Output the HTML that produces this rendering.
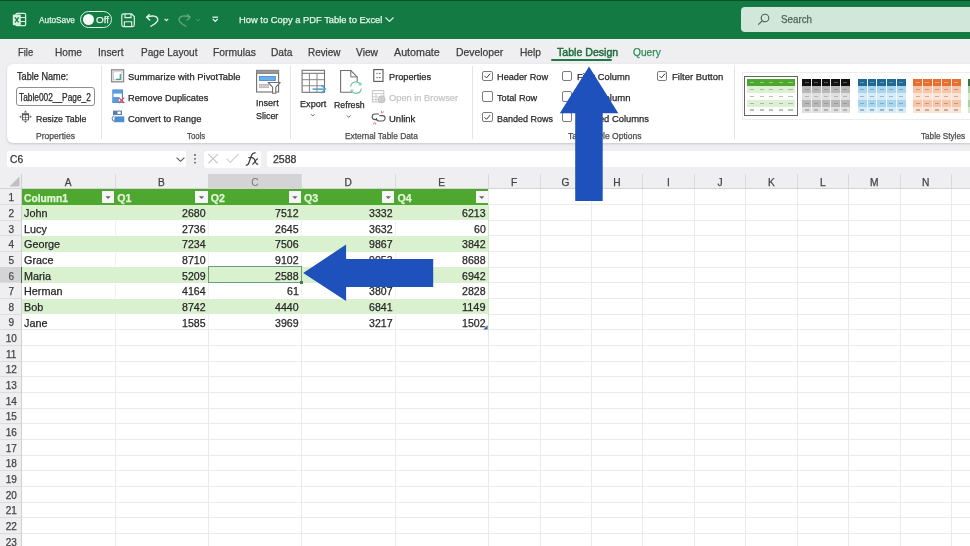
<!DOCTYPE html>
<html><head><meta charset="utf-8">
<style>
*{margin:0;padding:0;box-sizing:border-box}
html,body{width:970px;height:546px;overflow:hidden;background:#fff;font-family:"Liberation Sans",sans-serif;color:#262626}
.a{position:absolute;white-space:nowrap;-webkit-text-stroke:0.25px currentColor}
svg{position:absolute;overflow:visible}
#root{position:absolute;left:0;top:0;width:970px;height:546px;will-change:transform}
</style></head><body><div id="root">

<div class="a" style="left:0.00px;top:0.00px;width:970.00px;height:38.80px;background:#127a42;"></div>
<div class="a" style="left:0.00px;top:0.00px;width:970.00px;height:1.30px;background:#064f22;"></div>
<svg style="left:0;top:0" width="30" height="30" viewBox="0 0 30 30">
<rect x="16" y="13.3" width="9.6" height="12.4" rx="1.2" fill="none" stroke="#d6eedd" stroke-width="1.3"/>
<path d="M16 17.5 H25.6 M16 21.5 H25.6" stroke="#d6eedd" stroke-width="1.2"/>
<rect x="12.8" y="14.6" width="8" height="10.6" rx="1" fill="#d6eedd"/>
<path d="M15 17.3 L18.6 22.5 M18.6 17.3 L15 22.5" stroke="#127a42" stroke-width="1.3"/>
</svg>
<div class="a" style="left:38.50px;top:13.91px;font-size:9.6px;line-height:11.04px;color:#e6f4ea;transform:scaleX(0.8647);transform-origin:0 0;">AutoSave</div>
<div class="a" style="left:80.00px;top:11.00px;width:31.50px;height:17.00px;background:transparent;border:1.3px solid #dcefe3;border-radius:9px"></div>
<div class="a" style="left:82.80px;top:13.80px;width:11.40px;height:11.40px;background:#f4faf6;border-radius:50%"></div>
<div class="a" style="left:96.00px;top:13.91px;font-size:9.6px;line-height:11.04px;color:#e6f4ea;transform:scaleX(1.0295);transform-origin:0 0;">Off</div>
<svg style="left:0;top:0" width="140" height="30" viewBox="0 0 140 30">
<path d="M123.5 13.8 H131.5 L134.3 16.6 V24.8 Q134.3 26.6 132.5 26.6 H123.6 Q121.8 26.6 121.8 24.8 V15.6 Q121.8 13.8 123.5 13.8 Z" fill="none" stroke="#e6f4ea" stroke-width="1.2"/>
<path d="M125 13.8 V17.6 H131 V13.8" fill="none" stroke="#e6f4ea" stroke-width="1.1"/>
<path d="M124.4 26.6 V21.8 H131.7 V26.6" fill="none" stroke="#e6f4ea" stroke-width="1.1"/>
</svg>
<svg style="left:0;top:0" width="220" height="30" viewBox="0 0 220 30">
<path d="M146.8 17.3 C152 15.2 157.5 15.5 157.8 19.5 C158 22.5 153.5 24.5 150.5 26.6" fill="none" stroke="#e6f4ea" stroke-width="1.3"/>
<path d="M149.6 14.2 L146.6 17.3 L150.2 20.4" fill="none" stroke="#e6f4ea" stroke-width="1.3"/>
<path d="M164.6 18.8 L166.4 20.7 L168.2 18.8" fill="none" stroke="#e6f4ea" stroke-width="1.1"/>
<path d="M190 17.3 C184.8 15.2 179.3 15.5 179 19.5 C178.8 22.5 183.3 24.5 186.3 26.6" fill="none" stroke="#5ea87b" stroke-width="1.3"/>
<path d="M187.2 14.2 L190.2 17.3 L186.6 20.4" fill="none" stroke="#5ea87b" stroke-width="1.3"/>
<path d="M196.3 19.2 L198 20.9 L199.7 19.2" fill="none" stroke="#5ea87b" stroke-width="0.9"/>
<path d="M212.5 17.2 H218" stroke="#e6f4ea" stroke-width="1.3"/>
<path d="M212.8 19 L215.25 21.4 L217.7 19" fill="none" stroke="#e6f4ea" stroke-width="1.3"/>
</svg>
<div class="a" style="left:238.80px;top:14.21px;font-size:9.6px;line-height:11.04px;color:#e6f4ea;transform:scaleX(0.9756);transform-origin:0 0;">How to Copy a PDF Table to Excel</div>
<svg style="left:0;top:0" width="400" height="30" viewBox="0 0 400 30"><path d="M385.5 17.5 L389.5 21.5 L393.5 17.5" fill="none" stroke="#dcefe3" stroke-width="1.2"/></svg>
<div class="a" style="left:741.00px;top:7.00px;width:240.00px;height:25.00px;background:#d1e7d9;border-radius:4px"></div>
<svg style="left:0;top:0" width="800" height="40" viewBox="0 0 800 40">
<circle cx="765" cy="18" r="3.8" fill="none" stroke="#4b6153" stroke-width="1.1"/>
<path d="M762.2 20.8 L758.3 24.7" stroke="#4b6153" stroke-width="1.2"/>
</svg>
<div class="a" style="left:780.50px;top:14.45px;font-size:10px;line-height:11.50px;color:#4d6456;transform:scaleX(0.9784);transform-origin:0 0;">Search</div>
<div class="a" style="left:0.00px;top:38.80px;width:970.00px;height:135.20px;background:#efeef0;"></div>
<div class="a" style="left:17.70px;top:45.64px;font-size:10.9px;line-height:12.54px;color:#3d3d3d;transform:scaleX(0.8654);transform-origin:0 0;">File</div>
<div class="a" style="left:54.80px;top:45.64px;font-size:10.9px;line-height:12.54px;color:#3d3d3d;transform:scaleX(0.9286);transform-origin:0 0;">Home</div>
<div class="a" style="left:98.10px;top:45.64px;font-size:10.9px;line-height:12.54px;color:#3d3d3d;transform:scaleX(0.9354);transform-origin:0 0;">Insert</div>
<div class="a" style="left:140.50px;top:45.64px;font-size:10.9px;line-height:12.54px;color:#3d3d3d;transform:scaleX(0.9230);transform-origin:0 0;">Page Layout</div>
<div class="a" style="left:212.50px;top:45.64px;font-size:10.9px;line-height:12.54px;color:#3d3d3d;transform:scaleX(0.9466);transform-origin:0 0;">Formulas</div>
<div class="a" style="left:271.00px;top:45.64px;font-size:10.9px;line-height:12.54px;color:#3d3d3d;transform:scaleX(0.9338);transform-origin:0 0;">Data</div>
<div class="a" style="left:308.00px;top:45.64px;font-size:10.9px;line-height:12.54px;color:#3d3d3d;transform:scaleX(0.9093);transform-origin:0 0;">Review</div>
<div class="a" style="left:356.00px;top:45.64px;font-size:10.9px;line-height:12.54px;color:#3d3d3d;transform:scaleX(0.9390);transform-origin:0 0;">View</div>
<div class="a" style="left:393.90px;top:45.64px;font-size:10.9px;line-height:12.54px;color:#3d3d3d;transform:scaleX(0.9816);transform-origin:0 0;">Automate</div>
<div class="a" style="left:456.40px;top:45.64px;font-size:10.9px;line-height:12.54px;color:#3d3d3d;transform:scaleX(0.9520);transform-origin:0 0;">Developer</div>
<div class="a" style="left:519.80px;top:45.64px;font-size:10.9px;line-height:12.54px;color:#3d3d3d;transform:scaleX(0.9367);transform-origin:0 0;">Help</div>
<div class="a" style="left:556.90px;top:45.64px;font-size:10.9px;line-height:12.54px;color:#1d6b3d;transform:scaleX(0.9727);transform-origin:0 0;-webkit-text-stroke:0.45px currentColor;">Table Design</div>
<div class="a" style="left:633.00px;top:45.64px;font-size:10.9px;line-height:12.54px;color:#2e8b57;transform:scaleX(0.9366);transform-origin:0 0;">Query</div>
<div class="a" style="left:550.50px;top:58.50px;width:61.00px;height:2.60px;background:#1f7a47;border-radius:2px"></div>
<div class="a" style="left:7.00px;top:64.00px;width:990.00px;height:79.00px;background:#fff;border-radius:6px;box-shadow:0 1px 2.5px rgba(0,0,0,.17)"></div>
<div class="a" style="left:16.80px;top:70.95px;font-size:10.0px;line-height:11.50px;color:#262626;transform:scaleX(0.9138);transform-origin:0 0;">Table Name:</div>
<div class="a" style="left:16.10px;top:87.20px;width:78.70px;height:18.60px;background:#fff;border:1px solid #8f8f8f;border-radius:3px"></div>
<div class="a" style="left:19.00px;top:91.75px;font-size:10.0px;line-height:11.50px;color:#262626;transform:scaleX(0.8330);transform-origin:0 0;">Table002__Page_2</div>
<svg style="left:0;top:0" width="40" height="130" viewBox="0 0 40 130">
<rect x="22" y="113.2" width="7" height="7.2" fill="#5a5a5a"/>
<rect x="23.1" y="115.2" width="2.1" height="1.8" fill="#fff"/><rect x="25.9" y="115.2" width="2.1" height="1.8" fill="#fff"/>
<rect x="23.1" y="117.6" width="2.1" height="1.8" fill="#fff"/><rect x="25.9" y="117.6" width="2.1" height="1.8" fill="#fff"/>
<path d="M25.5 110.2 L24 112.4 H27 Z M25.5 123 L24 120.9 H27 Z M19.2 116.8 L21.3 115.3 V118.3 Z M31.8 116.8 L29.7 115.3 V118.3 Z" fill="#6a6a6a"/>
</svg>
<div class="a" style="left:35.90px;top:112.92px;font-size:9.7px;line-height:11.15px;color:#262626;transform:scaleX(0.9122);transform-origin:0 0;">Resize Table</div>
<div class="a" style="left:36.20px;top:131.45px;font-size:9.0px;line-height:10.35px;color:#4a4a4a;transform:scaleX(0.9507);transform-origin:0 0;">Properties</div>
<div class="a" style="left:100.50px;top:66.00px;width:1.00px;height:73.00px;background:#e4e4e4;"></div>
<svg style="left:0;top:0" width="300" height="130" viewBox="0 0 300 130">
<rect x="111.6" y="69.8" width="12" height="12" fill="#f2f2f2" stroke="#8a8a8a" stroke-width="1.3"/>
<rect x="113.6" y="71.8" width="8" height="8" fill="#fff" stroke="#b5b5b5" stroke-width="0.6"/>
<path d="M120.3 74 V79.3 H116.2" fill="none" stroke="#3a9f8a" stroke-width="1.2"/>
<rect x="112.9" y="90" width="9.5" height="12.4" fill="#fff" stroke="#3d86d0" stroke-width="1.1"/>
<rect x="112.9" y="90" width="9.5" height="3.6" fill="#5b9be0"/>
<rect x="112.9" y="97" width="6" height="5.4" fill="#5b9be0"/>
<path d="M118.8 97.6 L124.2 103 M124.2 97.6 L118.8 103" stroke="#e0474a" stroke-width="1.1"/>
<rect x="113" y="110.6" width="9" height="4.4" fill="#5d7fa8"/>
<rect x="117.5" y="111.6" width="3.2" height="2.4" fill="#fff"/>
<rect x="114.5" y="116.4" width="9.8" height="5.8" fill="#4a90d9"/>
<path d="M113.8 115.5 Q110.6 118.2 113 121 L115.8 121" fill="none" stroke="#5f7fa0" stroke-width="1"/>
<path d="M114.8 119.6 L116.3 121 L114.8 122.4" fill="none" stroke="#5f7fa0" stroke-width="0.9"/>
</svg>
<div class="a" style="left:127.90px;top:71.12px;font-size:9.7px;line-height:11.15px;color:#262626;transform:scaleX(0.9678);transform-origin:0 0;">Summarize with PivotTable</div>
<div class="a" style="left:127.90px;top:91.82px;font-size:9.7px;line-height:11.15px;color:#262626;transform:scaleX(0.9559);transform-origin:0 0;">Remove Duplicates</div>
<div class="a" style="left:127.90px;top:112.92px;font-size:9.7px;line-height:11.15px;color:#262626;transform:scaleX(0.9667);transform-origin:0 0;">Convert to Range</div>
<svg style="left:0;top:0" width="300" height="130" viewBox="0 0 300 130">
<rect x="256.6" y="70.4" width="22" height="21.6" fill="#fff" stroke="#6f6f6f" stroke-width="1.1"/>
<rect x="256.6" y="70.4" width="22" height="3" fill="#9a9a9a"/>
<path d="M256.6 73.4 H278.6" stroke="#6f6f6f" stroke-width="0.8"/>
<rect x="259.3" y="76.4" width="16" height="4.2" fill="#66b3ec" stroke="#3a78c4" stroke-width="0.7"/>
<rect x="259.3" y="84.2" width="9.4" height="3.6" fill="#d4c8cc" stroke="#a9a0a4" stroke-width="0.5"/>
<path d="M268.2 82.5 H280.2 L275.8 87.2 V93.3 H272.6 V87.2 Z" fill="#fff" stroke="#6f6f6f" stroke-width="1.1" stroke-linejoin="round"/>
</svg>
<div class="a" style="left:256.00px;top:97.04px;font-size:9.9px;line-height:11.38px;color:#262626;transform:scaleX(0.9168);transform-origin:0 0;">Insert</div>
<div class="a" style="left:256.00px;top:109.84px;font-size:9.9px;line-height:11.38px;color:#262626;transform:scaleX(0.9048);transform-origin:0 0;">Slicer</div>
<div class="a" style="left:187.20px;top:131.45px;font-size:9.0px;line-height:10.35px;color:#4a4a4a;transform:scaleX(0.8662);transform-origin:0 0;">Tools</div>
<div class="a" style="left:289.70px;top:66.00px;width:1.00px;height:73.00px;background:#e4e4e4;"></div>
<svg style="left:0;top:0" width="480" height="130" viewBox="0 0 480 130">
<rect x="302.1" y="70.3" width="22.4" height="22" fill="#fff" stroke="#707070" stroke-width="1.1"/>
<path d="M302.1 73.3 H324.5" stroke="#707070" stroke-width="1"/>
<path d="M302.1 79.7 H324.5 M302.1 85.8 H324.5 M309.4 73.3 V92.3 M317 73.3 V92.3" stroke="#7a7a7a" stroke-width="0.9"/>
<path d="M312.5 89.1 H324.6" stroke="#4aa0d2" stroke-width="1.5"/>
<path d="M321.2 85 L325.4 89.1 L321.2 93.2" fill="none" stroke="#4aa0d2" stroke-width="1.3"/>
<path d="M340.6 70.5 H350.8 L357.2 76.9 V92.3 H340.6 Z" fill="#fff" stroke="#707070" stroke-width="1.1"/>
<path d="M350.8 70.5 V76.9 H357.2" fill="none" stroke="#707070" stroke-width="1"/>
<circle cx="356" cy="87.6" r="6.3" fill="#fff"/>
<path d="M350.6 86.6 A5.4 5.4 0 0 1 360.4 84.2" fill="none" stroke="#6cc39a" stroke-width="1.2"/>
<path d="M361 82.6 V85 H358.6" fill="none" stroke="#6cc39a" stroke-width="1"/>
<path d="M361.4 88.6 A5.4 5.4 0 0 1 351.6 91" fill="none" stroke="#6cc39a" stroke-width="1.2"/>
<path d="M351 92.6 V90.2 H353.4" fill="none" stroke="#6cc39a" stroke-width="1"/>
<path d="M311 114.2 L312.8 116 L314.6 114.2" fill="none" stroke="#555" stroke-width="0.9"/>
<path d="M346.9 115.5 L348.7 117.3 L350.5 115.5" fill="none" stroke="#555" stroke-width="0.9"/>
<rect x="373.8" y="69.6" width="9.2" height="11.8" fill="#fff" stroke="#555" stroke-width="1.1"/>
<path d="M376.3 73.4 H377.6 M376.3 77.6 H377.6 M378.8 73.4 H380.6 M378.8 77.6 H380.6" stroke="#666" stroke-width="1"/>
<rect x="372.4" y="90.6" width="11.4" height="11.4" fill="#fff" stroke="#c4c4c4" stroke-width="1"/>
<path d="M372.4 93.6 H383.8 M372.4 96.8 H378 M372.4 99.6 H378 M376 93.6 V102" stroke="#c9c9c9" stroke-width="0.9"/>
<circle cx="381.6" cy="99.3" r="3.5" fill="#cfcfcf" stroke="#bdbdbd" stroke-width="0.8"/>
<path d="M378.8 114 H375 A2.8 2.8 0 0 0 375 119.6 H377.2" fill="none" stroke="#555" stroke-width="1.1"/>
<path d="M379.4 115.6 H382.4 A2.7 2.7 0 0 1 382.4 121 H378.6 A2.7 2.7 0 0 1 376.4 117.8" fill="none" stroke="#555" stroke-width="1.1"/>
<path d="M381.6 110.8 L381.3 113.2 M383.6 111.4 L382.3 113.4 M373.4 124.4 L374.6 122.2 M375.6 124.6 L375.8 122.6" stroke="#e0607a" stroke-width="0.9"/>
</svg>
<div class="a" style="left:300.00px;top:97.64px;font-size:9.9px;line-height:11.38px;color:#262626;transform:scaleX(0.9226);transform-origin:0 0;">Export</div>
<div class="a" style="left:334.00px;top:99.12px;font-size:9.7px;line-height:11.15px;color:#262626;transform:scaleX(0.9068);transform-origin:0 0;">Refresh</div>
<div class="a" style="left:388.50px;top:71.12px;font-size:9.7px;line-height:11.15px;color:#262626;transform:scaleX(0.9523);transform-origin:0 0;">Properties</div>
<div class="a" style="left:388.50px;top:91.82px;font-size:9.7px;line-height:11.15px;color:#c6c6c6;transform:scaleX(0.9578);transform-origin:0 0;">Open in Browser</div>
<div class="a" style="left:388.50px;top:112.92px;font-size:9.7px;line-height:11.15px;color:#262626;transform:scaleX(0.9794);transform-origin:0 0;">Unlink</div>
<div class="a" style="left:345.00px;top:131.45px;font-size:9.0px;line-height:10.35px;color:#4a4a4a;transform:scaleX(0.9288);transform-origin:0 0;">External Table Data</div>
<div class="a" style="left:472.20px;top:66.00px;width:1.00px;height:73.00px;background:#e4e4e4;"></div>
<div class="a" style="left:482.00px;top:70.60px;width:10.50px;height:10.30px;background:#fff;border:1px solid #7c7c7c;border-radius:2px"></div>
<svg style="left:0;top:0" width="1" height="1" viewBox="0 0 1 1"><path d="M484.5 75.89999999999999 L486.5 77.89999999999999 L490.2 73.6" fill="none" stroke="#3a3a3a" stroke-width="1"/></svg>
<div class="a" style="left:496.90px;top:71.12px;font-size:9.7px;line-height:11.15px;color:#262626;transform:scaleX(0.9478);transform-origin:0 0;">Header Row</div>
<div class="a" style="left:482.00px;top:91.40px;width:10.50px;height:10.30px;background:#fff;border:1px solid #7c7c7c;border-radius:2px"></div>
<div class="a" style="left:496.90px;top:91.82px;font-size:9.7px;line-height:11.15px;color:#262626;transform:scaleX(0.9462);transform-origin:0 0;">Total Row</div>
<div class="a" style="left:482.00px;top:112.00px;width:10.50px;height:10.30px;background:#fff;border:1px solid #7c7c7c;border-radius:2px"></div>
<svg style="left:0;top:0" width="1" height="1" viewBox="0 0 1 1"><path d="M484.5 117.3 L486.5 119.3 L490.2 115" fill="none" stroke="#3a3a3a" stroke-width="1"/></svg>
<div class="a" style="left:496.90px;top:112.92px;font-size:9.7px;line-height:11.15px;color:#262626;transform:scaleX(0.9289);transform-origin:0 0;">Banded Rows</div>
<div class="a" style="left:561.50px;top:70.60px;width:10.50px;height:10.30px;background:#fff;border:1px solid #7c7c7c;border-radius:2px"></div>
<div class="a" style="left:576.50px;top:71.12px;font-size:9.7px;line-height:11.15px;color:#262626;transform:scaleX(0.9641);transform-origin:0 0;">First Column</div>
<div class="a" style="left:561.50px;top:91.40px;width:10.50px;height:10.30px;background:#fff;border:1px solid #7c7c7c;border-radius:2px"></div>
<div class="a" style="left:576.50px;top:91.82px;font-size:9.7px;line-height:11.15px;color:#262626;transform:scaleX(0.9825);transform-origin:0 0;">Last Column</div>
<div class="a" style="left:561.50px;top:112.00px;width:10.50px;height:10.30px;background:#fff;border:1px solid #7c7c7c;border-radius:2px"></div>
<div class="a" style="left:576.50px;top:112.92px;font-size:9.7px;line-height:11.15px;color:#262626;transform:scaleX(0.9675);transform-origin:0 0;">Banded Columns</div>
<div class="a" style="left:656.90px;top:70.60px;width:10.50px;height:10.30px;background:#fff;border:1px solid #7c7c7c;border-radius:2px"></div>
<svg style="left:0;top:0" width="1" height="1" viewBox="0 0 1 1"><path d="M659.4 75.89999999999999 L661.4 77.89999999999999 L665.1 73.6" fill="none" stroke="#3a3a3a" stroke-width="1"/></svg>
<div class="a" style="left:672.00px;top:71.12px;font-size:9.7px;line-height:11.15px;color:#262626;transform:scaleX(0.9810);transform-origin:0 0;">Filter Button</div>
<div class="a" style="left:567.50px;top:131.45px;font-size:9.0px;line-height:10.35px;color:#4a4a4a;transform:scaleX(0.9479);transform-origin:0 0;">Table Style Options</div>
<div class="a" style="left:733.80px;top:66.00px;width:1.00px;height:73.00px;background:#e4e4e4;"></div>
<div class="a" style="left:744.10px;top:76.10px;width:54.40px;height:40.40px;background:#fff;border:1.4px solid #666"></div>
<div class="a" style="left:747.20px;top:79.20px;width:48.00px;height:6.84px;background:#4ea72e;"></div>
<div class="a" style="left:750.00px;top:82.10px;width:4.20px;height:1.10px;background:#8fcf78;"></div>
<div class="a" style="left:759.60px;top:82.10px;width:4.20px;height:1.10px;background:#8fcf78;"></div>
<div class="a" style="left:769.20px;top:82.10px;width:4.20px;height:1.10px;background:#8fcf78;"></div>
<div class="a" style="left:778.80px;top:82.10px;width:4.20px;height:1.10px;background:#8fcf78;"></div>
<div class="a" style="left:788.40px;top:82.10px;width:4.20px;height:1.10px;background:#8fcf78;"></div>
<div class="a" style="left:747.20px;top:86.04px;width:48.00px;height:6.84px;background:#def0d4;"></div>
<div class="a" style="left:750.00px;top:88.94px;width:4.20px;height:1.10px;background:#a9bca3;"></div>
<div class="a" style="left:759.60px;top:88.94px;width:4.20px;height:1.10px;background:#a9bca3;"></div>
<div class="a" style="left:769.20px;top:88.94px;width:4.20px;height:1.10px;background:#a9bca3;"></div>
<div class="a" style="left:778.80px;top:88.94px;width:4.20px;height:1.10px;background:#a9bca3;"></div>
<div class="a" style="left:788.40px;top:88.94px;width:4.20px;height:1.10px;background:#a9bca3;"></div>
<div class="a" style="left:747.20px;top:92.88px;width:48.00px;height:6.84px;background:#fbfdfa;"></div>
<div class="a" style="left:750.00px;top:95.78px;width:4.20px;height:1.10px;background:#b9c2b7;"></div>
<div class="a" style="left:759.60px;top:95.78px;width:4.20px;height:1.10px;background:#b9c2b7;"></div>
<div class="a" style="left:769.20px;top:95.78px;width:4.20px;height:1.10px;background:#b9c2b7;"></div>
<div class="a" style="left:778.80px;top:95.78px;width:4.20px;height:1.10px;background:#b9c2b7;"></div>
<div class="a" style="left:788.40px;top:95.78px;width:4.20px;height:1.10px;background:#b9c2b7;"></div>
<div class="a" style="left:747.20px;top:99.72px;width:48.00px;height:6.84px;background:#def0d4;"></div>
<div class="a" style="left:750.00px;top:102.62px;width:4.20px;height:1.10px;background:#a9bca3;"></div>
<div class="a" style="left:759.60px;top:102.62px;width:4.20px;height:1.10px;background:#a9bca3;"></div>
<div class="a" style="left:769.20px;top:102.62px;width:4.20px;height:1.10px;background:#a9bca3;"></div>
<div class="a" style="left:778.80px;top:102.62px;width:4.20px;height:1.10px;background:#a9bca3;"></div>
<div class="a" style="left:788.40px;top:102.62px;width:4.20px;height:1.10px;background:#a9bca3;"></div>
<div class="a" style="left:747.20px;top:106.56px;width:48.00px;height:6.84px;background:#fbfdfa;"></div>
<div class="a" style="left:750.00px;top:109.46px;width:4.20px;height:1.10px;background:#b9c2b7;"></div>
<div class="a" style="left:759.60px;top:109.46px;width:4.20px;height:1.10px;background:#b9c2b7;"></div>
<div class="a" style="left:769.20px;top:109.46px;width:4.20px;height:1.10px;background:#b9c2b7;"></div>
<div class="a" style="left:778.80px;top:109.46px;width:4.20px;height:1.10px;background:#b9c2b7;"></div>
<div class="a" style="left:788.40px;top:109.46px;width:4.20px;height:1.10px;background:#b9c2b7;"></div>
<div class="a" style="left:801.90px;top:79.20px;width:48.00px;height:6.84px;background:#111111;"></div>
<div class="a" style="left:804.70px;top:82.10px;width:4.20px;height:1.10px;background:#555555;"></div>
<div class="a" style="left:814.30px;top:82.10px;width:4.20px;height:1.10px;background:#555555;"></div>
<div class="a" style="left:823.90px;top:82.10px;width:4.20px;height:1.10px;background:#555555;"></div>
<div class="a" style="left:833.50px;top:82.10px;width:4.20px;height:1.10px;background:#555555;"></div>
<div class="a" style="left:843.10px;top:82.10px;width:4.20px;height:1.10px;background:#555555;"></div>
<div class="a" style="left:801.90px;top:86.04px;width:48.00px;height:6.84px;background:#b8b8b8;"></div>
<div class="a" style="left:804.70px;top:88.94px;width:4.20px;height:1.10px;background:#9a9a9a;"></div>
<div class="a" style="left:814.30px;top:88.94px;width:4.20px;height:1.10px;background:#9a9a9a;"></div>
<div class="a" style="left:823.90px;top:88.94px;width:4.20px;height:1.10px;background:#9a9a9a;"></div>
<div class="a" style="left:833.50px;top:88.94px;width:4.20px;height:1.10px;background:#9a9a9a;"></div>
<div class="a" style="left:843.10px;top:88.94px;width:4.20px;height:1.10px;background:#9a9a9a;"></div>
<div class="a" style="left:801.90px;top:92.88px;width:48.00px;height:6.84px;background:#e0e0e0;"></div>
<div class="a" style="left:804.70px;top:95.78px;width:4.20px;height:1.10px;background:#b4b4b4;"></div>
<div class="a" style="left:814.30px;top:95.78px;width:4.20px;height:1.10px;background:#b4b4b4;"></div>
<div class="a" style="left:823.90px;top:95.78px;width:4.20px;height:1.10px;background:#b4b4b4;"></div>
<div class="a" style="left:833.50px;top:95.78px;width:4.20px;height:1.10px;background:#b4b4b4;"></div>
<div class="a" style="left:843.10px;top:95.78px;width:4.20px;height:1.10px;background:#b4b4b4;"></div>
<div class="a" style="left:801.90px;top:99.72px;width:48.00px;height:6.84px;background:#b8b8b8;"></div>
<div class="a" style="left:804.70px;top:102.62px;width:4.20px;height:1.10px;background:#9a9a9a;"></div>
<div class="a" style="left:814.30px;top:102.62px;width:4.20px;height:1.10px;background:#9a9a9a;"></div>
<div class="a" style="left:823.90px;top:102.62px;width:4.20px;height:1.10px;background:#9a9a9a;"></div>
<div class="a" style="left:833.50px;top:102.62px;width:4.20px;height:1.10px;background:#9a9a9a;"></div>
<div class="a" style="left:843.10px;top:102.62px;width:4.20px;height:1.10px;background:#9a9a9a;"></div>
<div class="a" style="left:801.90px;top:106.56px;width:48.00px;height:6.84px;background:#e0e0e0;"></div>
<div class="a" style="left:804.70px;top:109.46px;width:4.20px;height:1.10px;background:#b4b4b4;"></div>
<div class="a" style="left:814.30px;top:109.46px;width:4.20px;height:1.10px;background:#b4b4b4;"></div>
<div class="a" style="left:823.90px;top:109.46px;width:4.20px;height:1.10px;background:#b4b4b4;"></div>
<div class="a" style="left:833.50px;top:109.46px;width:4.20px;height:1.10px;background:#b4b4b4;"></div>
<div class="a" style="left:843.10px;top:109.46px;width:4.20px;height:1.10px;background:#b4b4b4;"></div>
<div class="a" style="left:811.10px;top:79.20px;width:0.80px;height:34.20px;background:#f0f0f0;"></div>
<div class="a" style="left:820.70px;top:79.20px;width:0.80px;height:34.20px;background:#f0f0f0;"></div>
<div class="a" style="left:830.30px;top:79.20px;width:0.80px;height:34.20px;background:#f0f0f0;"></div>
<div class="a" style="left:839.90px;top:79.20px;width:0.80px;height:34.20px;background:#f0f0f0;"></div>
<div class="a" style="left:857.50px;top:79.20px;width:48.00px;height:6.84px;background:#1e6a92;"></div>
<div class="a" style="left:860.30px;top:82.10px;width:4.20px;height:1.10px;background:#5e97b8;"></div>
<div class="a" style="left:869.90px;top:82.10px;width:4.20px;height:1.10px;background:#5e97b8;"></div>
<div class="a" style="left:879.50px;top:82.10px;width:4.20px;height:1.10px;background:#5e97b8;"></div>
<div class="a" style="left:889.10px;top:82.10px;width:4.20px;height:1.10px;background:#5e97b8;"></div>
<div class="a" style="left:898.70px;top:82.10px;width:4.20px;height:1.10px;background:#5e97b8;"></div>
<div class="a" style="left:857.50px;top:86.04px;width:48.00px;height:6.84px;background:#a9d5ef;"></div>
<div class="a" style="left:860.30px;top:88.94px;width:4.20px;height:1.10px;background:#86a9bd;"></div>
<div class="a" style="left:869.90px;top:88.94px;width:4.20px;height:1.10px;background:#86a9bd;"></div>
<div class="a" style="left:879.50px;top:88.94px;width:4.20px;height:1.10px;background:#86a9bd;"></div>
<div class="a" style="left:889.10px;top:88.94px;width:4.20px;height:1.10px;background:#86a9bd;"></div>
<div class="a" style="left:898.70px;top:88.94px;width:4.20px;height:1.10px;background:#86a9bd;"></div>
<div class="a" style="left:857.50px;top:92.88px;width:48.00px;height:6.84px;background:#d6ecf8;"></div>
<div class="a" style="left:860.30px;top:95.78px;width:4.20px;height:1.10px;background:#9fb7c4;"></div>
<div class="a" style="left:869.90px;top:95.78px;width:4.20px;height:1.10px;background:#9fb7c4;"></div>
<div class="a" style="left:879.50px;top:95.78px;width:4.20px;height:1.10px;background:#9fb7c4;"></div>
<div class="a" style="left:889.10px;top:95.78px;width:4.20px;height:1.10px;background:#9fb7c4;"></div>
<div class="a" style="left:898.70px;top:95.78px;width:4.20px;height:1.10px;background:#9fb7c4;"></div>
<div class="a" style="left:857.50px;top:99.72px;width:48.00px;height:6.84px;background:#a9d5ef;"></div>
<div class="a" style="left:860.30px;top:102.62px;width:4.20px;height:1.10px;background:#86a9bd;"></div>
<div class="a" style="left:869.90px;top:102.62px;width:4.20px;height:1.10px;background:#86a9bd;"></div>
<div class="a" style="left:879.50px;top:102.62px;width:4.20px;height:1.10px;background:#86a9bd;"></div>
<div class="a" style="left:889.10px;top:102.62px;width:4.20px;height:1.10px;background:#86a9bd;"></div>
<div class="a" style="left:898.70px;top:102.62px;width:4.20px;height:1.10px;background:#86a9bd;"></div>
<div class="a" style="left:857.50px;top:106.56px;width:48.00px;height:6.84px;background:#d6ecf8;"></div>
<div class="a" style="left:860.30px;top:109.46px;width:4.20px;height:1.10px;background:#9fb7c4;"></div>
<div class="a" style="left:869.90px;top:109.46px;width:4.20px;height:1.10px;background:#9fb7c4;"></div>
<div class="a" style="left:879.50px;top:109.46px;width:4.20px;height:1.10px;background:#9fb7c4;"></div>
<div class="a" style="left:889.10px;top:109.46px;width:4.20px;height:1.10px;background:#9fb7c4;"></div>
<div class="a" style="left:898.70px;top:109.46px;width:4.20px;height:1.10px;background:#9fb7c4;"></div>
<div class="a" style="left:866.70px;top:79.20px;width:0.80px;height:34.20px;background:#f0f6fa;"></div>
<div class="a" style="left:876.30px;top:79.20px;width:0.80px;height:34.20px;background:#f0f6fa;"></div>
<div class="a" style="left:885.90px;top:79.20px;width:0.80px;height:34.20px;background:#f0f6fa;"></div>
<div class="a" style="left:895.50px;top:79.20px;width:0.80px;height:34.20px;background:#f0f6fa;"></div>
<div class="a" style="left:912.70px;top:79.20px;width:48.00px;height:6.84px;background:#e56f2e;"></div>
<div class="a" style="left:915.50px;top:82.10px;width:4.20px;height:1.10px;background:#f0a47a;"></div>
<div class="a" style="left:925.10px;top:82.10px;width:4.20px;height:1.10px;background:#f0a47a;"></div>
<div class="a" style="left:934.70px;top:82.10px;width:4.20px;height:1.10px;background:#f0a47a;"></div>
<div class="a" style="left:944.30px;top:82.10px;width:4.20px;height:1.10px;background:#f0a47a;"></div>
<div class="a" style="left:953.90px;top:82.10px;width:4.20px;height:1.10px;background:#f0a47a;"></div>
<div class="a" style="left:912.70px;top:86.04px;width:48.00px;height:6.84px;background:#f7c6a9;"></div>
<div class="a" style="left:915.50px;top:88.94px;width:4.20px;height:1.10px;background:#c49a82;"></div>
<div class="a" style="left:925.10px;top:88.94px;width:4.20px;height:1.10px;background:#c49a82;"></div>
<div class="a" style="left:934.70px;top:88.94px;width:4.20px;height:1.10px;background:#c49a82;"></div>
<div class="a" style="left:944.30px;top:88.94px;width:4.20px;height:1.10px;background:#c49a82;"></div>
<div class="a" style="left:953.90px;top:88.94px;width:4.20px;height:1.10px;background:#c49a82;"></div>
<div class="a" style="left:912.70px;top:92.88px;width:48.00px;height:6.84px;background:#fbe4d5;"></div>
<div class="a" style="left:915.50px;top:95.78px;width:4.20px;height:1.10px;background:#c9ada0;"></div>
<div class="a" style="left:925.10px;top:95.78px;width:4.20px;height:1.10px;background:#c9ada0;"></div>
<div class="a" style="left:934.70px;top:95.78px;width:4.20px;height:1.10px;background:#c9ada0;"></div>
<div class="a" style="left:944.30px;top:95.78px;width:4.20px;height:1.10px;background:#c9ada0;"></div>
<div class="a" style="left:953.90px;top:95.78px;width:4.20px;height:1.10px;background:#c9ada0;"></div>
<div class="a" style="left:912.70px;top:99.72px;width:48.00px;height:6.84px;background:#f7c6a9;"></div>
<div class="a" style="left:915.50px;top:102.62px;width:4.20px;height:1.10px;background:#c49a82;"></div>
<div class="a" style="left:925.10px;top:102.62px;width:4.20px;height:1.10px;background:#c49a82;"></div>
<div class="a" style="left:934.70px;top:102.62px;width:4.20px;height:1.10px;background:#c49a82;"></div>
<div class="a" style="left:944.30px;top:102.62px;width:4.20px;height:1.10px;background:#c49a82;"></div>
<div class="a" style="left:953.90px;top:102.62px;width:4.20px;height:1.10px;background:#c49a82;"></div>
<div class="a" style="left:912.70px;top:106.56px;width:48.00px;height:6.84px;background:#fbe4d5;"></div>
<div class="a" style="left:915.50px;top:109.46px;width:4.20px;height:1.10px;background:#c9ada0;"></div>
<div class="a" style="left:925.10px;top:109.46px;width:4.20px;height:1.10px;background:#c9ada0;"></div>
<div class="a" style="left:934.70px;top:109.46px;width:4.20px;height:1.10px;background:#c9ada0;"></div>
<div class="a" style="left:944.30px;top:109.46px;width:4.20px;height:1.10px;background:#c9ada0;"></div>
<div class="a" style="left:953.90px;top:109.46px;width:4.20px;height:1.10px;background:#c9ada0;"></div>
<div class="a" style="left:921.90px;top:79.20px;width:0.80px;height:34.20px;background:#faeee8;"></div>
<div class="a" style="left:931.50px;top:79.20px;width:0.80px;height:34.20px;background:#faeee8;"></div>
<div class="a" style="left:941.10px;top:79.20px;width:0.80px;height:34.20px;background:#faeee8;"></div>
<div class="a" style="left:950.70px;top:79.20px;width:0.80px;height:34.20px;background:#faeee8;"></div>
<div class="a" style="left:967.60px;top:79.20px;width:48.00px;height:6.84px;background:#2e7a38;"></div>
<div class="a" style="left:970.40px;top:82.10px;width:4.20px;height:1.10px;background:#5fa862;"></div>
<div class="a" style="left:980.00px;top:82.10px;width:4.20px;height:1.10px;background:#5fa862;"></div>
<div class="a" style="left:989.60px;top:82.10px;width:4.20px;height:1.10px;background:#5fa862;"></div>
<div class="a" style="left:999.20px;top:82.10px;width:4.20px;height:1.10px;background:#5fa862;"></div>
<div class="a" style="left:1008.80px;top:82.10px;width:4.20px;height:1.10px;background:#5fa862;"></div>
<div class="a" style="left:967.60px;top:86.04px;width:48.00px;height:6.84px;background:#a5d69a;"></div>
<div class="a" style="left:970.40px;top:88.94px;width:4.20px;height:1.10px;background:#7fa87f;"></div>
<div class="a" style="left:980.00px;top:88.94px;width:4.20px;height:1.10px;background:#7fa87f;"></div>
<div class="a" style="left:989.60px;top:88.94px;width:4.20px;height:1.10px;background:#7fa87f;"></div>
<div class="a" style="left:999.20px;top:88.94px;width:4.20px;height:1.10px;background:#7fa87f;"></div>
<div class="a" style="left:1008.80px;top:88.94px;width:4.20px;height:1.10px;background:#7fa87f;"></div>
<div class="a" style="left:967.60px;top:92.88px;width:48.00px;height:6.84px;background:#d2ecc8;"></div>
<div class="a" style="left:970.40px;top:95.78px;width:4.20px;height:1.10px;background:#92ad92;"></div>
<div class="a" style="left:980.00px;top:95.78px;width:4.20px;height:1.10px;background:#92ad92;"></div>
<div class="a" style="left:989.60px;top:95.78px;width:4.20px;height:1.10px;background:#92ad92;"></div>
<div class="a" style="left:999.20px;top:95.78px;width:4.20px;height:1.10px;background:#92ad92;"></div>
<div class="a" style="left:1008.80px;top:95.78px;width:4.20px;height:1.10px;background:#92ad92;"></div>
<div class="a" style="left:967.60px;top:99.72px;width:48.00px;height:6.84px;background:#a5d69a;"></div>
<div class="a" style="left:970.40px;top:102.62px;width:4.20px;height:1.10px;background:#7fa87f;"></div>
<div class="a" style="left:980.00px;top:102.62px;width:4.20px;height:1.10px;background:#7fa87f;"></div>
<div class="a" style="left:989.60px;top:102.62px;width:4.20px;height:1.10px;background:#7fa87f;"></div>
<div class="a" style="left:999.20px;top:102.62px;width:4.20px;height:1.10px;background:#7fa87f;"></div>
<div class="a" style="left:1008.80px;top:102.62px;width:4.20px;height:1.10px;background:#7fa87f;"></div>
<div class="a" style="left:967.60px;top:106.56px;width:48.00px;height:6.84px;background:#d2ecc8;"></div>
<div class="a" style="left:970.40px;top:109.46px;width:4.20px;height:1.10px;background:#92ad92;"></div>
<div class="a" style="left:980.00px;top:109.46px;width:4.20px;height:1.10px;background:#92ad92;"></div>
<div class="a" style="left:989.60px;top:109.46px;width:4.20px;height:1.10px;background:#92ad92;"></div>
<div class="a" style="left:999.20px;top:109.46px;width:4.20px;height:1.10px;background:#92ad92;"></div>
<div class="a" style="left:1008.80px;top:109.46px;width:4.20px;height:1.10px;background:#92ad92;"></div>
<div class="a" style="left:976.80px;top:79.20px;width:0.80px;height:34.20px;background:#f0f6f0;"></div>
<div class="a" style="left:986.40px;top:79.20px;width:0.80px;height:34.20px;background:#f0f6f0;"></div>
<div class="a" style="left:996.00px;top:79.20px;width:0.80px;height:34.20px;background:#f0f6f0;"></div>
<div class="a" style="left:1005.60px;top:79.20px;width:0.80px;height:34.20px;background:#f0f6f0;"></div>
<div class="a" style="left:742.00px;top:72.40px;width:240.00px;height:47.60px;background:transparent;border:1px solid #ececec;border-right:0"></div>
<div class="a" style="left:920.60px;top:131.45px;font-size:9.0px;line-height:10.35px;color:#4a4a4a;transform:scaleX(0.9067);transform-origin:0 0;">Table Styles</div>
<div class="a" style="left:7.40px;top:150.80px;width:178.60px;height:16.10px;background:#fff;border-radius:2px"></div>
<div class="a" style="left:9.90px;top:153.40px;font-size:10.5px;line-height:12.07px;color:#333;transform:scaleX(0.9760);transform-origin:0 0;">C6</div>
<svg style="left:0;top:0" width="270" height="170" viewBox="0 0 270 170">
<path d="M176.6 157.6 L180.5 161.3 L184.4 157.6" fill="none" stroke="#505050" stroke-width="1.1"/>
<circle cx="195" cy="155" r="0.9" fill="#555"/><circle cx="195" cy="158.8" r="0.9" fill="#555"/><circle cx="195" cy="162.6" r="0.9" fill="#555"/>
</svg>
<div class="a" style="left:204.10px;top:150.80px;width:56.90px;height:16.90px;background:#fff;border-radius:3px"></div>
<svg style="left:0;top:0" width="270" height="170" viewBox="0 0 270 170">
<path d="M208.3 154.2 L217.8 163.4 M217.8 154.2 L208.3 163.4" stroke="#c4c4c4" stroke-width="1.1"/>
<path d="M226.6 158.6 L230.2 162.5 L238.8 153.8" fill="none" stroke="#cfcfcf" stroke-width="1.1"/>
</svg>
<svg style="left:0;top:0" width="270" height="170" viewBox="0 0 270 170">
<path d="M245.8 165 Q247.8 165.8 248.9 162.8 L251.6 155.2 Q252.8 152.2 255.6 152.9" fill="none" stroke="#3a3a3a" stroke-width="1.25"/>
<path d="M248.3 157.6 H253.4" stroke="#3a3a3a" stroke-width="1.1"/>
<path d="M252.6 158.8 Q254.2 158.2 254.9 160.2 L255.9 162.9 Q256.6 164.6 258.2 163.9" fill="none" stroke="#3a3a3a" stroke-width="1.15"/>
<path d="M257.9 158.6 Q256.8 158.8 255.6 160.6 L253.6 163.4 Q252.9 164.4 252.2 163.9" fill="none" stroke="#3a3a3a" stroke-width="1.15"/>
</svg>
<div class="a" style="left:267.20px;top:150.90px;width:720.00px;height:16.50px;background:#fff;border-radius:3px"></div>
<div class="a" style="left:273.00px;top:153.40px;font-size:10.5px;line-height:12.07px;color:#333;transform:scaleX(1.0060);transform-origin:0 0;">2588</div>
<div class="a" style="left:0.00px;top:189.00px;width:970.00px;height:357.00px;background:#fff;"></div>
<div class="a" style="left:0.00px;top:174.00px;width:970.00px;height:15.00px;background:#efeef0;"></div>
<div class="a" style="left:0.00px;top:189.00px;width:21.10px;height:357.00px;background:#efeef0;"></div>
<svg style="left:0;top:0" width="22" height="190" viewBox="0 0 22 190"><path d="M19.5 176.5 V186.5 H9.5 Z" fill="#c0c0c0"/></svg>
<div class="a" style="left:21.10px;top:189.00px;width:467.00px;height:15.65px;background:#4ea72e;"></div>
<div class="a" style="left:21.10px;top:204.65px;width:467.00px;height:15.65px;background:#daf1cf;"></div>
<div class="a" style="left:21.10px;top:235.95px;width:467.00px;height:15.65px;background:#daf1cf;"></div>
<div class="a" style="left:21.10px;top:267.25px;width:467.00px;height:15.65px;background:#daf1cf;"></div>
<div class="a" style="left:21.10px;top:298.55px;width:467.00px;height:15.65px;background:#daf1cf;"></div>
<div class="a" style="left:21.10px;top:329.85px;width:1.00px;height:216.15px;background:#eaeaea;"></div>
<div class="a" style="left:21.10px;top:174.00px;width:1.00px;height:15.00px;background:#dadada;"></div>
<div class="a" style="left:114.50px;top:329.85px;width:1.00px;height:216.15px;background:#eaeaea;"></div>
<div class="a" style="left:114.50px;top:174.00px;width:1.00px;height:15.00px;background:#dadada;"></div>
<div class="a" style="left:114.50px;top:220.30px;width:1.00px;height:15.65px;background:#f1f1f1;"></div>
<div class="a" style="left:114.50px;top:251.60px;width:1.00px;height:15.65px;background:#f1f1f1;"></div>
<div class="a" style="left:114.50px;top:282.90px;width:1.00px;height:15.65px;background:#f1f1f1;"></div>
<div class="a" style="left:114.50px;top:314.20px;width:1.00px;height:15.65px;background:#f1f1f1;"></div>
<div class="a" style="left:207.90px;top:329.85px;width:1.00px;height:216.15px;background:#eaeaea;"></div>
<div class="a" style="left:207.90px;top:174.00px;width:1.00px;height:15.00px;background:#dadada;"></div>
<div class="a" style="left:207.90px;top:220.30px;width:1.00px;height:15.65px;background:#f1f1f1;"></div>
<div class="a" style="left:207.90px;top:251.60px;width:1.00px;height:15.65px;background:#f1f1f1;"></div>
<div class="a" style="left:207.90px;top:282.90px;width:1.00px;height:15.65px;background:#f1f1f1;"></div>
<div class="a" style="left:207.90px;top:314.20px;width:1.00px;height:15.65px;background:#f1f1f1;"></div>
<div class="a" style="left:301.30px;top:329.85px;width:1.00px;height:216.15px;background:#eaeaea;"></div>
<div class="a" style="left:301.30px;top:174.00px;width:1.00px;height:15.00px;background:#dadada;"></div>
<div class="a" style="left:301.30px;top:220.30px;width:1.00px;height:15.65px;background:#f1f1f1;"></div>
<div class="a" style="left:301.30px;top:251.60px;width:1.00px;height:15.65px;background:#f1f1f1;"></div>
<div class="a" style="left:301.30px;top:282.90px;width:1.00px;height:15.65px;background:#f1f1f1;"></div>
<div class="a" style="left:301.30px;top:314.20px;width:1.00px;height:15.65px;background:#f1f1f1;"></div>
<div class="a" style="left:394.70px;top:329.85px;width:1.00px;height:216.15px;background:#eaeaea;"></div>
<div class="a" style="left:394.70px;top:174.00px;width:1.00px;height:15.00px;background:#dadada;"></div>
<div class="a" style="left:394.70px;top:220.30px;width:1.00px;height:15.65px;background:#f1f1f1;"></div>
<div class="a" style="left:394.70px;top:251.60px;width:1.00px;height:15.65px;background:#f1f1f1;"></div>
<div class="a" style="left:394.70px;top:282.90px;width:1.00px;height:15.65px;background:#f1f1f1;"></div>
<div class="a" style="left:394.70px;top:314.20px;width:1.00px;height:15.65px;background:#f1f1f1;"></div>
<div class="a" style="left:488.10px;top:329.85px;width:1.00px;height:216.15px;background:#eaeaea;"></div>
<div class="a" style="left:488.10px;top:174.00px;width:1.00px;height:15.00px;background:#dadada;"></div>
<div class="a" style="left:488.10px;top:189.00px;width:1.00px;height:140.85px;background:#eaeaea;"></div>
<div class="a" style="left:539.55px;top:329.85px;width:1.00px;height:216.15px;background:#eaeaea;"></div>
<div class="a" style="left:539.55px;top:174.00px;width:1.00px;height:15.00px;background:#dadada;"></div>
<div class="a" style="left:539.55px;top:189.00px;width:1.00px;height:140.85px;background:#eaeaea;"></div>
<div class="a" style="left:591.00px;top:329.85px;width:1.00px;height:216.15px;background:#eaeaea;"></div>
<div class="a" style="left:591.00px;top:174.00px;width:1.00px;height:15.00px;background:#dadada;"></div>
<div class="a" style="left:591.00px;top:189.00px;width:1.00px;height:140.85px;background:#eaeaea;"></div>
<div class="a" style="left:642.45px;top:329.85px;width:1.00px;height:216.15px;background:#eaeaea;"></div>
<div class="a" style="left:642.45px;top:174.00px;width:1.00px;height:15.00px;background:#dadada;"></div>
<div class="a" style="left:642.45px;top:189.00px;width:1.00px;height:140.85px;background:#eaeaea;"></div>
<div class="a" style="left:693.90px;top:329.85px;width:1.00px;height:216.15px;background:#eaeaea;"></div>
<div class="a" style="left:693.90px;top:174.00px;width:1.00px;height:15.00px;background:#dadada;"></div>
<div class="a" style="left:693.90px;top:189.00px;width:1.00px;height:140.85px;background:#eaeaea;"></div>
<div class="a" style="left:745.35px;top:329.85px;width:1.00px;height:216.15px;background:#eaeaea;"></div>
<div class="a" style="left:745.35px;top:174.00px;width:1.00px;height:15.00px;background:#dadada;"></div>
<div class="a" style="left:745.35px;top:189.00px;width:1.00px;height:140.85px;background:#eaeaea;"></div>
<div class="a" style="left:796.80px;top:329.85px;width:1.00px;height:216.15px;background:#eaeaea;"></div>
<div class="a" style="left:796.80px;top:174.00px;width:1.00px;height:15.00px;background:#dadada;"></div>
<div class="a" style="left:796.80px;top:189.00px;width:1.00px;height:140.85px;background:#eaeaea;"></div>
<div class="a" style="left:848.25px;top:329.85px;width:1.00px;height:216.15px;background:#eaeaea;"></div>
<div class="a" style="left:848.25px;top:174.00px;width:1.00px;height:15.00px;background:#dadada;"></div>
<div class="a" style="left:848.25px;top:189.00px;width:1.00px;height:140.85px;background:#eaeaea;"></div>
<div class="a" style="left:899.70px;top:329.85px;width:1.00px;height:216.15px;background:#eaeaea;"></div>
<div class="a" style="left:899.70px;top:174.00px;width:1.00px;height:15.00px;background:#dadada;"></div>
<div class="a" style="left:899.70px;top:189.00px;width:1.00px;height:140.85px;background:#eaeaea;"></div>
<div class="a" style="left:951.15px;top:329.85px;width:1.00px;height:216.15px;background:#eaeaea;"></div>
<div class="a" style="left:951.15px;top:174.00px;width:1.00px;height:15.00px;background:#dadada;"></div>
<div class="a" style="left:951.15px;top:189.00px;width:1.00px;height:140.85px;background:#eaeaea;"></div>
<div class="a" style="left:488.10px;top:204.15px;width:970.00px;height:1.00px;background:#ebebeb;"></div>
<div class="a" style="left:0.00px;top:204.15px;width:21.10px;height:1.00px;background:#dcdcdc;"></div>
<div class="a" style="left:488.10px;top:219.80px;width:970.00px;height:1.00px;background:#ebebeb;"></div>
<div class="a" style="left:0.00px;top:219.80px;width:21.10px;height:1.00px;background:#dcdcdc;"></div>
<div class="a" style="left:488.10px;top:235.45px;width:970.00px;height:1.00px;background:#ebebeb;"></div>
<div class="a" style="left:0.00px;top:235.45px;width:21.10px;height:1.00px;background:#dcdcdc;"></div>
<div class="a" style="left:488.10px;top:251.10px;width:970.00px;height:1.00px;background:#ebebeb;"></div>
<div class="a" style="left:0.00px;top:251.10px;width:21.10px;height:1.00px;background:#dcdcdc;"></div>
<div class="a" style="left:488.10px;top:266.75px;width:970.00px;height:1.00px;background:#ebebeb;"></div>
<div class="a" style="left:0.00px;top:266.75px;width:21.10px;height:1.00px;background:#dcdcdc;"></div>
<div class="a" style="left:488.10px;top:282.40px;width:970.00px;height:1.00px;background:#ebebeb;"></div>
<div class="a" style="left:0.00px;top:282.40px;width:21.10px;height:1.00px;background:#dcdcdc;"></div>
<div class="a" style="left:488.10px;top:298.05px;width:970.00px;height:1.00px;background:#ebebeb;"></div>
<div class="a" style="left:0.00px;top:298.05px;width:21.10px;height:1.00px;background:#dcdcdc;"></div>
<div class="a" style="left:488.10px;top:313.70px;width:970.00px;height:1.00px;background:#ebebeb;"></div>
<div class="a" style="left:0.00px;top:313.70px;width:21.10px;height:1.00px;background:#dcdcdc;"></div>
<div class="a" style="left:21.10px;top:329.35px;width:970.00px;height:1.00px;background:#ebebeb;"></div>
<div class="a" style="left:0.00px;top:329.35px;width:21.10px;height:1.00px;background:#dcdcdc;"></div>
<div class="a" style="left:21.10px;top:345.00px;width:970.00px;height:1.00px;background:#ebebeb;"></div>
<div class="a" style="left:0.00px;top:345.00px;width:21.10px;height:1.00px;background:#dcdcdc;"></div>
<div class="a" style="left:21.10px;top:360.65px;width:970.00px;height:1.00px;background:#ebebeb;"></div>
<div class="a" style="left:0.00px;top:360.65px;width:21.10px;height:1.00px;background:#dcdcdc;"></div>
<div class="a" style="left:21.10px;top:376.30px;width:970.00px;height:1.00px;background:#ebebeb;"></div>
<div class="a" style="left:0.00px;top:376.30px;width:21.10px;height:1.00px;background:#dcdcdc;"></div>
<div class="a" style="left:21.10px;top:391.95px;width:970.00px;height:1.00px;background:#ebebeb;"></div>
<div class="a" style="left:0.00px;top:391.95px;width:21.10px;height:1.00px;background:#dcdcdc;"></div>
<div class="a" style="left:21.10px;top:407.60px;width:970.00px;height:1.00px;background:#ebebeb;"></div>
<div class="a" style="left:0.00px;top:407.60px;width:21.10px;height:1.00px;background:#dcdcdc;"></div>
<div class="a" style="left:21.10px;top:423.25px;width:970.00px;height:1.00px;background:#ebebeb;"></div>
<div class="a" style="left:0.00px;top:423.25px;width:21.10px;height:1.00px;background:#dcdcdc;"></div>
<div class="a" style="left:21.10px;top:438.90px;width:970.00px;height:1.00px;background:#ebebeb;"></div>
<div class="a" style="left:0.00px;top:438.90px;width:21.10px;height:1.00px;background:#dcdcdc;"></div>
<div class="a" style="left:21.10px;top:454.55px;width:970.00px;height:1.00px;background:#ebebeb;"></div>
<div class="a" style="left:0.00px;top:454.55px;width:21.10px;height:1.00px;background:#dcdcdc;"></div>
<div class="a" style="left:21.10px;top:470.20px;width:970.00px;height:1.00px;background:#ebebeb;"></div>
<div class="a" style="left:0.00px;top:470.20px;width:21.10px;height:1.00px;background:#dcdcdc;"></div>
<div class="a" style="left:21.10px;top:485.85px;width:970.00px;height:1.00px;background:#ebebeb;"></div>
<div class="a" style="left:0.00px;top:485.85px;width:21.10px;height:1.00px;background:#dcdcdc;"></div>
<div class="a" style="left:21.10px;top:501.50px;width:970.00px;height:1.00px;background:#ebebeb;"></div>
<div class="a" style="left:0.00px;top:501.50px;width:21.10px;height:1.00px;background:#dcdcdc;"></div>
<div class="a" style="left:21.10px;top:517.15px;width:970.00px;height:1.00px;background:#ebebeb;"></div>
<div class="a" style="left:0.00px;top:517.15px;width:21.10px;height:1.00px;background:#dcdcdc;"></div>
<div class="a" style="left:21.10px;top:532.80px;width:970.00px;height:1.00px;background:#ebebeb;"></div>
<div class="a" style="left:0.00px;top:532.80px;width:21.10px;height:1.00px;background:#dcdcdc;"></div>
<div class="a" style="left:21.10px;top:548.45px;width:970.00px;height:1.00px;background:#ebebeb;"></div>
<div class="a" style="left:0.00px;top:548.45px;width:21.10px;height:1.00px;background:#dcdcdc;"></div>
<div class="a" style="left:21.10px;top:564.10px;width:970.00px;height:1.00px;background:#ebebeb;"></div>
<div class="a" style="left:0.00px;top:564.10px;width:21.10px;height:1.00px;background:#dcdcdc;"></div>
<div class="a" style="left:0.00px;top:188.30px;width:970.00px;height:0.80px;background:#d4d4d4;"></div>
<div class="a" style="left:20.80px;top:174.00px;width:0.80px;height:372.00px;background:#d0d0d0;"></div>
<div class="a" style="left:487.50px;top:204.65px;width:1.00px;height:125.20px;background:#cfe9c2;"></div>
<div class="a" style="left:64.70px;top:176.77px;font-size:10.2px;line-height:11.73px;color:#444;">A</div>
<div class="a" style="left:158.10px;top:176.77px;font-size:10.2px;line-height:11.73px;color:#444;">B</div>
<div class="a" style="left:208.40px;top:174.00px;width:92.90px;height:14.30px;background:#d4d3d5;"></div>
<div class="a" style="left:251.22px;top:176.77px;font-size:10.2px;line-height:11.73px;color:#787878;-webkit-text-stroke:0;">C</div>
<div class="a" style="left:344.62px;top:176.77px;font-size:10.2px;line-height:11.73px;color:#444;">D</div>
<div class="a" style="left:438.30px;top:176.77px;font-size:10.2px;line-height:11.73px;color:#444;">E</div>
<div class="a" style="left:511.01px;top:176.77px;font-size:10.2px;line-height:11.73px;color:#444;">F</div>
<div class="a" style="left:561.61px;top:176.77px;font-size:10.2px;line-height:11.73px;color:#444;">G</div>
<div class="a" style="left:613.34px;top:176.77px;font-size:10.2px;line-height:11.73px;color:#444;">H</div>
<div class="a" style="left:667.06px;top:176.77px;font-size:10.2px;line-height:11.73px;color:#444;">I</div>
<div class="a" style="left:717.38px;top:176.77px;font-size:10.2px;line-height:11.73px;color:#444;">J</div>
<div class="a" style="left:767.97px;top:176.77px;font-size:10.2px;line-height:11.73px;color:#444;">K</div>
<div class="a" style="left:819.99px;top:176.77px;font-size:10.2px;line-height:11.73px;color:#444;">L</div>
<div class="a" style="left:870.03px;top:176.77px;font-size:10.2px;line-height:11.73px;color:#444;">M</div>
<div class="a" style="left:922.04px;top:176.77px;font-size:10.2px;line-height:11.73px;color:#444;">N</div>
<div class="a" style="left:8.42px;top:192.25px;font-size:10px;line-height:11.50px;color:#444;">1</div>
<div class="a" style="left:8.42px;top:207.90px;font-size:10px;line-height:11.50px;color:#444;">2</div>
<div class="a" style="left:8.42px;top:223.55px;font-size:10px;line-height:11.50px;color:#444;">3</div>
<div class="a" style="left:8.42px;top:239.20px;font-size:10px;line-height:11.50px;color:#444;">4</div>
<div class="a" style="left:8.42px;top:254.85px;font-size:10px;line-height:11.50px;color:#444;">5</div>
<div class="a" style="left:0.00px;top:267.25px;width:20.80px;height:15.15px;background:#d4d3d5;"></div>
<div class="a" style="left:20.80px;top:267.25px;width:1.30px;height:15.65px;background:#4f6b58;"></div>
<div class="a" style="left:8.42px;top:270.50px;font-size:10px;line-height:11.50px;color:#555;">6</div>
<div class="a" style="left:8.42px;top:286.15px;font-size:10px;line-height:11.50px;color:#444;">7</div>
<div class="a" style="left:8.42px;top:301.80px;font-size:10px;line-height:11.50px;color:#444;">8</div>
<div class="a" style="left:8.42px;top:317.45px;font-size:10px;line-height:11.50px;color:#444;">9</div>
<div class="a" style="left:5.64px;top:333.10px;font-size:10px;line-height:11.50px;color:#444;">10</div>
<div class="a" style="left:6.01px;top:348.75px;font-size:10px;line-height:11.50px;color:#444;">11</div>
<div class="a" style="left:5.64px;top:364.40px;font-size:10px;line-height:11.50px;color:#444;">12</div>
<div class="a" style="left:5.64px;top:380.05px;font-size:10px;line-height:11.50px;color:#444;">13</div>
<div class="a" style="left:5.64px;top:395.70px;font-size:10px;line-height:11.50px;color:#444;">14</div>
<div class="a" style="left:5.64px;top:411.35px;font-size:10px;line-height:11.50px;color:#444;">15</div>
<div class="a" style="left:5.64px;top:427.00px;font-size:10px;line-height:11.50px;color:#444;">16</div>
<div class="a" style="left:5.64px;top:442.65px;font-size:10px;line-height:11.50px;color:#444;">17</div>
<div class="a" style="left:5.64px;top:458.30px;font-size:10px;line-height:11.50px;color:#444;">18</div>
<div class="a" style="left:5.64px;top:473.95px;font-size:10px;line-height:11.50px;color:#444;">19</div>
<div class="a" style="left:5.64px;top:489.60px;font-size:10px;line-height:11.50px;color:#444;">20</div>
<div class="a" style="left:5.64px;top:505.25px;font-size:10px;line-height:11.50px;color:#444;">21</div>
<div class="a" style="left:5.64px;top:520.90px;font-size:10px;line-height:11.50px;color:#444;">22</div>
<div class="a" style="left:5.64px;top:536.55px;font-size:10px;line-height:11.50px;color:#444;">23</div>
<div class="a" style="left:5.64px;top:552.20px;font-size:10px;line-height:11.50px;color:#444;">24</div>
<div class="a" style="left:23.90px;top:191.71px;font-size:10.6px;line-height:12.19px;color:#e4f6da;font-weight:bold;transform:scaleX(0.9703);transform-origin:0 0;">Column1</div>
<div class="a" style="left:101.90px;top:191.00px;width:12.40px;height:12.30px;background:#f6f6f6;"></div>
<svg style="left:0;top:0" width="1" height="1" viewBox="0 0 1 1"><path d="M105.50 196.30 H110.70 L108.10 198.90 Z" fill="#666"/></svg>
<div class="a" style="left:117.30px;top:191.71px;font-size:10.6px;line-height:12.19px;color:#e4f6da;font-weight:bold;">Q1</div>
<div class="a" style="left:195.30px;top:191.00px;width:12.40px;height:12.30px;background:#f6f6f6;"></div>
<svg style="left:0;top:0" width="1" height="1" viewBox="0 0 1 1"><path d="M198.90 196.30 H204.10 L201.50 198.90 Z" fill="#666"/></svg>
<div class="a" style="left:210.70px;top:191.71px;font-size:10.6px;line-height:12.19px;color:#e4f6da;font-weight:bold;">Q2</div>
<div class="a" style="left:288.70px;top:191.00px;width:12.40px;height:12.30px;background:#f6f6f6;"></div>
<svg style="left:0;top:0" width="1" height="1" viewBox="0 0 1 1"><path d="M292.30 196.30 H297.50 L294.90 198.90 Z" fill="#666"/></svg>
<div class="a" style="left:304.10px;top:191.71px;font-size:10.6px;line-height:12.19px;color:#e4f6da;font-weight:bold;">Q3</div>
<div class="a" style="left:382.10px;top:191.00px;width:12.40px;height:12.30px;background:#f6f6f6;"></div>
<svg style="left:0;top:0" width="1" height="1" viewBox="0 0 1 1"><path d="M385.70 196.30 H390.90 L388.30 198.90 Z" fill="#666"/></svg>
<div class="a" style="left:397.50px;top:191.71px;font-size:10.6px;line-height:12.19px;color:#e4f6da;font-weight:bold;">Q4</div>
<div class="a" style="left:475.50px;top:191.00px;width:12.40px;height:12.30px;background:#f6f6f6;"></div>
<svg style="left:0;top:0" width="1" height="1" viewBox="0 0 1 1"><path d="M479.10 196.30 H484.30 L481.70 198.90 Z" fill="#666"/></svg>
<div class="a" style="left:24.00px;top:207.08px;font-size:10.8px;line-height:12.42px;color:#262626;">John</div>
<div class="a" style="left:181.78px;top:207.08px;font-size:10.8px;line-height:12.42px;color:#262626;transform:scaleX(0.9789);transform-origin:0 0;">2680</div>
<div class="a" style="left:275.18px;top:207.08px;font-size:10.8px;line-height:12.42px;color:#262626;transform:scaleX(0.9789);transform-origin:0 0;">7512</div>
<div class="a" style="left:368.58px;top:207.08px;font-size:10.8px;line-height:12.42px;color:#262626;transform:scaleX(0.9789);transform-origin:0 0;">3332</div>
<div class="a" style="left:461.98px;top:207.08px;font-size:10.8px;line-height:12.42px;color:#262626;transform:scaleX(0.9789);transform-origin:0 0;">6213</div>
<div class="a" style="left:24.00px;top:222.73px;font-size:10.8px;line-height:12.42px;color:#262626;">Lucy</div>
<div class="a" style="left:181.78px;top:222.73px;font-size:10.8px;line-height:12.42px;color:#262626;transform:scaleX(0.9789);transform-origin:0 0;">2736</div>
<div class="a" style="left:275.18px;top:222.73px;font-size:10.8px;line-height:12.42px;color:#262626;transform:scaleX(0.9789);transform-origin:0 0;">2645</div>
<div class="a" style="left:368.58px;top:222.73px;font-size:10.8px;line-height:12.42px;color:#262626;transform:scaleX(0.9789);transform-origin:0 0;">3632</div>
<div class="a" style="left:473.74px;top:222.73px;font-size:10.8px;line-height:12.42px;color:#262626;transform:scaleX(0.9789);transform-origin:0 0;">60</div>
<div class="a" style="left:24.00px;top:238.38px;font-size:10.8px;line-height:12.42px;color:#262626;">George</div>
<div class="a" style="left:181.78px;top:238.38px;font-size:10.8px;line-height:12.42px;color:#262626;transform:scaleX(0.9789);transform-origin:0 0;">7234</div>
<div class="a" style="left:275.18px;top:238.38px;font-size:10.8px;line-height:12.42px;color:#262626;transform:scaleX(0.9789);transform-origin:0 0;">7506</div>
<div class="a" style="left:368.58px;top:238.38px;font-size:10.8px;line-height:12.42px;color:#262626;transform:scaleX(0.9789);transform-origin:0 0;">9867</div>
<div class="a" style="left:461.98px;top:238.38px;font-size:10.8px;line-height:12.42px;color:#262626;transform:scaleX(0.9789);transform-origin:0 0;">3842</div>
<div class="a" style="left:24.00px;top:254.03px;font-size:10.8px;line-height:12.42px;color:#262626;">Grace</div>
<div class="a" style="left:181.78px;top:254.03px;font-size:10.8px;line-height:12.42px;color:#262626;transform:scaleX(0.9789);transform-origin:0 0;">8710</div>
<div class="a" style="left:275.18px;top:254.03px;font-size:10.8px;line-height:12.42px;color:#262626;transform:scaleX(0.9789);transform-origin:0 0;">9102</div>
<div class="a" style="left:368.58px;top:254.03px;font-size:10.8px;line-height:12.42px;color:#262626;transform:scaleX(0.9789);transform-origin:0 0;">9053</div>
<div class="a" style="left:461.98px;top:254.03px;font-size:10.8px;line-height:12.42px;color:#262626;transform:scaleX(0.9789);transform-origin:0 0;">8688</div>
<div class="a" style="left:24.00px;top:269.68px;font-size:10.8px;line-height:12.42px;color:#262626;">Maria</div>
<div class="a" style="left:181.78px;top:269.68px;font-size:10.8px;line-height:12.42px;color:#262626;transform:scaleX(0.9789);transform-origin:0 0;">5209</div>
<div class="a" style="left:275.18px;top:269.68px;font-size:10.8px;line-height:12.42px;color:#262626;transform:scaleX(0.9789);transform-origin:0 0;">2588</div>
<div class="a" style="left:368.58px;top:269.68px;font-size:10.8px;line-height:12.42px;color:#262626;transform:scaleX(0.9789);transform-origin:0 0;">9999</div>
<div class="a" style="left:461.98px;top:269.68px;font-size:10.8px;line-height:12.42px;color:#262626;transform:scaleX(0.9789);transform-origin:0 0;">6942</div>
<div class="a" style="left:24.00px;top:285.33px;font-size:10.8px;line-height:12.42px;color:#262626;">Herman</div>
<div class="a" style="left:181.78px;top:285.33px;font-size:10.8px;line-height:12.42px;color:#262626;transform:scaleX(0.9789);transform-origin:0 0;">4164</div>
<div class="a" style="left:286.94px;top:285.33px;font-size:10.8px;line-height:12.42px;color:#262626;transform:scaleX(0.9789);transform-origin:0 0;">61</div>
<div class="a" style="left:368.58px;top:285.33px;font-size:10.8px;line-height:12.42px;color:#262626;transform:scaleX(0.9789);transform-origin:0 0;">3807</div>
<div class="a" style="left:461.98px;top:285.33px;font-size:10.8px;line-height:12.42px;color:#262626;transform:scaleX(0.9789);transform-origin:0 0;">2828</div>
<div class="a" style="left:24.00px;top:300.98px;font-size:10.8px;line-height:12.42px;color:#262626;">Bob</div>
<div class="a" style="left:181.78px;top:300.98px;font-size:10.8px;line-height:12.42px;color:#262626;transform:scaleX(0.9789);transform-origin:0 0;">8742</div>
<div class="a" style="left:275.18px;top:300.98px;font-size:10.8px;line-height:12.42px;color:#262626;transform:scaleX(0.9789);transform-origin:0 0;">4440</div>
<div class="a" style="left:368.58px;top:300.98px;font-size:10.8px;line-height:12.42px;color:#262626;transform:scaleX(0.9789);transform-origin:0 0;">6841</div>
<div class="a" style="left:461.98px;top:300.98px;font-size:10.8px;line-height:12.42px;color:#262626;transform:scaleX(1.0127);transform-origin:0 0;">1149</div>
<div class="a" style="left:24.00px;top:316.63px;font-size:10.8px;line-height:12.42px;color:#262626;">Jane</div>
<div class="a" style="left:181.78px;top:316.63px;font-size:10.8px;line-height:12.42px;color:#262626;transform:scaleX(0.9789);transform-origin:0 0;">1585</div>
<div class="a" style="left:275.18px;top:316.63px;font-size:10.8px;line-height:12.42px;color:#262626;transform:scaleX(0.9789);transform-origin:0 0;">3969</div>
<div class="a" style="left:368.58px;top:316.63px;font-size:10.8px;line-height:12.42px;color:#262626;transform:scaleX(0.9789);transform-origin:0 0;">3217</div>
<div class="a" style="left:461.98px;top:316.63px;font-size:10.8px;line-height:12.42px;color:#262626;transform:scaleX(0.9789);transform-origin:0 0;">1502</div>
<div class="a" style="left:207.50px;top:266.25px;width:94.80px;height:17.15px;background:transparent;border:1.5px solid #6a9e79"></div>
<div class="a" style="left:299.90px;top:280.70px;width:3.40px;height:3.40px;background:#3f7a52;"></div>
<svg style="left:0;top:0" width="1" height="1" viewBox="0 0 1 1"><path d="M487.60 325.35 V329.55 H483.40 Z" fill="#3a5aa8"/></svg>
<svg style="left:0;top:0" width="970" height="546" viewBox="0 0 970 546"><path d="M589 66.5 L618.3 113.2 L602.7 113.2 L602.7 201 L575.2 201 L575.2 113.2 L559.8 113.2 Z" fill="#1e51bc"/><path d="M303.2 272.9 L346.1 244.6 L346.1 258.9 L433.2 258.9 L433.2 287 L346.1 287 L346.1 301 Z" fill="#1e51bc"/></svg>
</div></body></html>
